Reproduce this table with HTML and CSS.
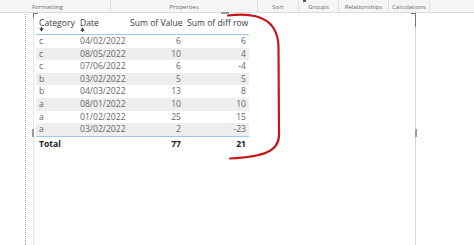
FILE: index.html
```html
<!DOCTYPE html>
<html>
<head>
<meta charset="utf-8">
<link rel="stylesheet" href="styles.css">
</head>
<body>
<div class="ribbon">
  <div class="sec sec-fmt"><span>Formatting</span></div>
  <div class="sec sec-prop"><span>Properties</span></div>
  <div class="sec sec-sort"><span>Sort</span></div>
  <div class="sec sec-grp"><span>Groups</span><i class="ico"></i></div>
  <div class="sec sec-rel"><span>Relationships</span></div>
  <div class="sec sec-calc"><span>Calculations</span></div>
  <div class="sec-rest"></div>
</div>
<div class="canvas">
  <div class="dotted"></div>
  <div class="frame">
    <span class="corner tl"></span>
    <span class="corner tr"></span>
    <span class="handle top"></span>
    <span class="handle left"></span>
    <span class="handle right"></span>
    <div class="table">
      <div class="thead">
        <div class="th c1">Category<svg class="sort" width="5" height="5" viewBox="0 0 5 5"><path d="M0.2 1.2 H4.8 L2.5 4.6 Z" fill="#333"/><rect x="2" y="0" width="1" height="1.5" fill="#333"/></svg></div>
        <div class="th c2">Date<svg class="sort" width="5" height="5" viewBox="0 0 5 5"><path d="M0.2 3.8 H4.8 L2.5 0.4 Z" fill="#333"/><rect x="2" y="3.5" width="1" height="1.5" fill="#333"/></svg></div>
        <div class="th c3">Sum of Value</div>
        <div class="th c4">Sum of diff row</div>
      </div>
      <div class="tbody">
        <div class="tr"><div class="td c1">c</div><div class="td c2">04/02/2022</div><div class="td c3">6</div><div class="td c4">6</div></div>
        <div class="tr alt"><div class="td c1">c</div><div class="td c2">08/05/2022</div><div class="td c3">10</div><div class="td c4">4</div></div>
        <div class="tr"><div class="td c1">c</div><div class="td c2">07/06/2022</div><div class="td c3">6</div><div class="td c4">-4</div></div>
        <div class="tr alt"><div class="td c1">b</div><div class="td c2">03/02/2022</div><div class="td c3">5</div><div class="td c4">5</div></div>
        <div class="tr"><div class="td c1">b</div><div class="td c2">04/03/2022</div><div class="td c3">13</div><div class="td c4">8</div></div>
        <div class="tr alt"><div class="td c1">a</div><div class="td c2">08/01/2022</div><div class="td c3">10</div><div class="td c4">10</div></div>
        <div class="tr"><div class="td c1">a</div><div class="td c2">01/02/2022</div><div class="td c3">25</div><div class="td c4">15</div></div>
        <div class="tr alt"><div class="td c1">a</div><div class="td c2">03/02/2022</div><div class="td c3">2</div><div class="td c4">-23</div></div>
      </div>
      <div class="tfoot">
        <div class="td c1">Total</div><div class="td c2"></div><div class="td c3">77</div><div class="td c4">21</div>
      </div>
    </div>
  </div>
  <svg class="annot" width="474" height="245" viewBox="0 0 474 245">
    <path d="M228,15.5 C264,11 278.5,24 278.5,48 L279,135 C279,152 262,157 230,158.5" fill="none" stroke="#c8151b" stroke-width="2.2" stroke-linecap="round"/>
  </svg>
</div>
</body>
</html>
```

FILE: styles.css
```css
html, body {
  margin: 0;
  padding: 0;
  background: #ffffff;
}
body {
  width: 474px;
  height: 245px;
  overflow: hidden;
  position: relative;
  font-family: "Open Sans", "Noto Sans", sans-serif;
}
.ribbon {
  display: flex;
  height: 13px;
  background: #f5f5f5;
  border-bottom: 1px solid #dcdcdc;
  box-sizing: border-box;
}
.sec {
  position: relative;
  height: 13px;
  border-right: 1px solid #dedede;
  box-sizing: border-box;
  display: flex;
  justify-content: center;
  align-items: flex-end;
  font-size: 6px;
  color: #6a6a6a;
  line-height: 10px;
  padding-bottom: 1px;
}
.sec-fmt { width: 111px; justify-content: flex-start; padding-left: 32px; }
.sec-prop { width: 147px; }
.sec-sort { width: 41px; }
.sec-grp { width: 40px; }
.sec-rel { width: 50px; }
.sec-calc { width: 41px; }
.sec-rest { flex: 1; }
.ico {
  position: absolute;
  left: 4px;
  top: 0;
  width: 3px;
  height: 2px;
  background: #555;
}
.canvas {
  position: relative;
  height: 232px;
}
.dotted {
  position: absolute;
  left: 25px;
  top: 1px;
  bottom: 0;
  border-left: 1px dotted #9a9a9a;
}
.frame {
  position: relative;
  margin-left: 33px;
  width: 383px;
  height: 240px;
  border-left: 1px solid #e2e2e2;
  border-right: 1px solid #d6d6d6;
  box-sizing: border-box;
  padding: 2px 0 0 2px;
}
.corner {
  position: absolute;
  width: 4px;
  height: 4px;
  top: 0;
}
.corner.tl { left: -1px; border-top: 1px solid #777; border-left: 1px solid #777; }
.corner.tr { right: -1px; border-top: 1px solid #777; border-right: 1px solid #777; }
.handle { position: absolute; background: #9a9a9a; }
.handle.top { left: 187px; top: -1px; width: 8px; height: 2px; }
.handle.left { left: -2px; top: 116px; width: 2px; height: 8px; }
.handle.right { right: -2px; top: 116px; width: 2px; height: 8px; }
.table {
  width: 213px;
  font-size: 8.6px;
}
.thead {
  display: flex;
  height: 20px;
  border-bottom: 1px solid #9ec6ea;
  color: #3a3a3a;
  box-sizing: border-box;
}
.th {
  position: relative;
  padding: 2px 3px 0 3px;
  line-height: 12px;
  white-space: nowrap;
}
.sort {
  position: absolute;
  left: 3px;
  top: 12px;
}
.c1 { width: 41px; box-sizing: border-box; }
.c2 { width: 50px; box-sizing: border-box; }
.c3 { width: 57px; box-sizing: border-box; text-align: right; }
.c4 { width: 65px; box-sizing: border-box; text-align: right; }
.tbody {
  border-bottom: 1px solid #9ec6ea;
}
.tr {
  display: flex;
  height: 12.6px;
  color: #666666;
  line-height: 12.6px;
}
.tr.alt { background: #eeeeee; }
.td {
  padding: 0 3px;
  white-space: nowrap;
}
.tfoot {
  display: flex;
  height: 15px;
  line-height: 15px;
  font-weight: bold;
  color: #222;
}
.annot {
  position: absolute;
  left: 0;
  top: -13px;
  pointer-events: none;
}
```
